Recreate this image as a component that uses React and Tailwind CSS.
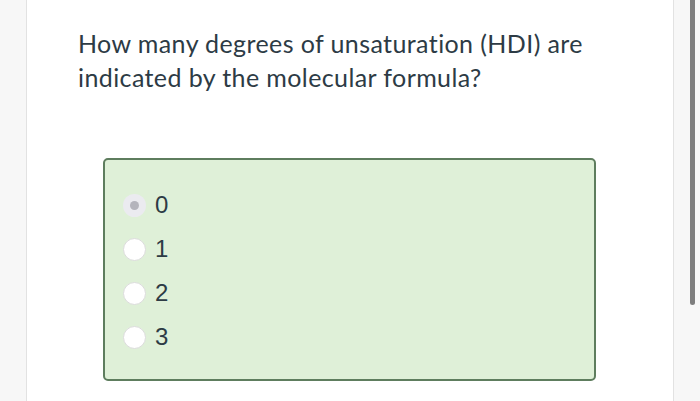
export default function App() {
  const opts = ["0", "1", "2", "3"];
  return (
    <div className="flex h-[401px] w-[700px] overflow-hidden bg-[#f5f5f5]" style={{ fontFamily: "Lato, 'Liberation Sans', sans-serif" }}>
      <div className="w-[27px] shrink-0 border-r border-[#e2e2e2] bg-[#f7f7f7]" />
      <div className="flex-1 bg-white pl-[51px] pt-[26px]">
        <p className="w-[560px] text-[25px] leading-[34px] tracking-[0.4px] text-[#2d3b45]">
          How many degrees of unsaturation (HDI) are<br />indicated by the molecular formula?
        </p>
        <div className="mt-[64px] ml-[25px] h-[223px] w-[493px] rounded-[5px] border-2 border-[#5e7d5e] bg-[#dff0d8] pl-[18px] pt-[23px]">
          {opts.map((o, i) => (
            <div key={o} className="flex h-[44px] items-center gap-[9px]">
              {i === 0 ? (
                <span className="flex h-[23px] w-[23px] items-center justify-center rounded-full bg-[#ebebf0]">
                  <span className="h-[9px] w-[9px] rounded-full bg-[#b4b4bc]" />
                </span>
              ) : (
                <span className="h-[23px] w-[23px] rounded-full border border-[#dcdcdc] bg-white" />
              )}
              <span className="text-[24px] leading-none text-[#2d3b45]" style={{ fontFamily: "'Liberation Sans', Arial, sans-serif" }}>{o}</span>
            </div>
          ))}
        </div>
      </div>
      <div className="relative w-[27px] shrink-0 border-l border-[#e2e2e2] bg-[#f7f7f7]">
        <div className="absolute left-[16px] top-0 h-[305px] w-[5px] rounded-b-full bg-[#7e7e7e]" />
      </div>
    </div>
  );
}
